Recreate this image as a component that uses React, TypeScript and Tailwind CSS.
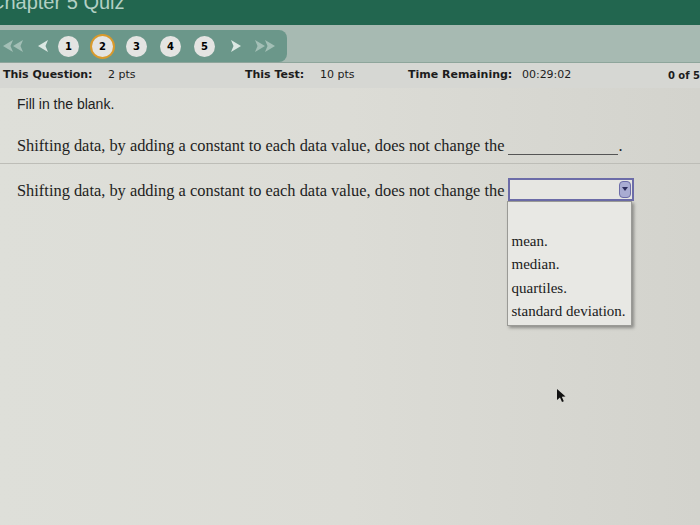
import React from 'react';

const sans = { fontFamily: '"DejaVu Sans", Verdana, sans-serif' };
const serif = { fontFamily: '"Liberation Serif", "Times New Roman", serif' };

const NavCircle = ({ n, active }: { n: number; active?: boolean }) => (
  <div
    className={`w-[21px] h-[21px] rounded-full bg-[#e4e4e2] flex items-center justify-center text-[10px] font-bold text-black ${
      active ? 'ring-2 ring-[#d99a2c]' : ''
    }`}
    style={sans}
  >
    {n}
  </div>
);

// chevron arrows in the nav strip
const Arrow = ({ dir, double, faded }: { dir: 'l' | 'r'; double?: boolean; faded?: boolean }) => {
  const one = dir === 'l' ? 'M11 1L1 7L11 13L8.5 7Z' : 'M1 1L11 7L1 13L3.5 7Z';
  return (
    <svg width={double ? 22 : 12} height="14" viewBox={double ? '0 0 22 14' : '0 0 12 14'} className={faded ? 'opacity-50' : ''}>
      <path d={one} fill="#dbe8e3" />
      {double && <path d={one} transform="translate(10 0)" fill="#dbe8e3" />}
    </svg>
  );
};

export default function App() {
  const options = ['mean.', 'median.', 'quartiles.', 'standard deviation.'];

  return (
    <div className="relative w-[700px] h-[525px] overflow-hidden bg-[#dcdcd6] flex flex-col">
      {/* title bar */}
      <div className="h-[25px] bg-[#22664f] overflow-hidden flex-none">
        <div className="text-[20px] leading-none text-[#b3d0c4] -mt-[8px] -ml-[10px]" style={{ fontFamily: '"Liberation Sans", Arial, sans-serif' }}>
          Chapter 5 Quiz
        </div>
      </div>

      {/* navigation strip */}
      <div className="h-[37px] bg-[#a7bab2] flex-none pt-[5px]">
        <div className="w-[287px] h-[32px] bg-[#6b978a] rounded-r-lg flex items-center pl-[2px]">
          <div className="w-[35px]"><Arrow dir="l" double faded /></div>
          <div className="w-[21px]"><Arrow dir="l" /></div>
          <div className="flex items-center gap-[13px]">
            <NavCircle n={1} />
            <NavCircle n={2} active />
            <NavCircle n={3} />
            <NavCircle n={4} />
            <NavCircle n={5} />
          </div>
          <div className="ml-[15px] w-[24px]"><Arrow dir="r" /></div>
          <Arrow dir="r" double faded />
        </div>
      </div>

      {/* info bar */}
      <div className="h-[26px] bg-[#d6d7d3] flex-none flex items-center text-[11px] text-[#1c1c1c] border-t border-[#8ea59b]" style={sans}>
        <span className="font-bold ml-[3px] w-[105px]">This Question:</span>
        <span className="w-[137px]">2 pts</span>
        <span className="font-bold w-[75px]">This Test:</span>
        <span className="w-[88px]">10 pts</span>
        <span className="font-bold w-[114px]">Time Remaining:</span>
        <span className="w-[146px]">00:29:02</span>
        <span className="font-bold text-[10px]">0 of 5</span>
      </div>

      {/* content */}
      <div className="flex-1 bg-gradient-to-r from-[#dedfd9] via-[#dcdcd6] to-[#d3d3cd]">
        <div className="pl-[17px] pt-[6px] text-[14px] text-[#222]" style={{ fontFamily: '"Liberation Sans", Arial, sans-serif' }}>
          Fill in the blank.
        </div>

        <div className="pl-[17px] pt-[19px] pb-[4px] text-[16.4px] text-[#1e1e1e] flex items-end border-b border-[#bdbdb7]" style={serif}>
          <span>Shifting data, by adding a constant to each data value, does not change the</span>
          <span className="w-[110px] ml-[4px] mb-[4px] border-b border-[#555]" />
          <span>.</span>
        </div>

        <div className="pl-[17px] pt-[14px] flex items-start text-[16.4px] text-[#1e1e1e]" style={serif}>
          <span className="pt-[1px]">Shifting data, by adding a constant to each data value, does not change the</span>
          <div className="ml-[4px] flex flex-col">
            <div className="w-[126px] h-[23px] border-2 border-[#6c6ca8] bg-[#e6e6e2] flex justify-end items-center pr-[1px]">
              <div className="w-[12px] h-[17px] bg-[#a9acd2] border border-[#6c6ca8] rounded-sm flex items-center justify-center">
                <svg width="6" height="4" viewBox="0 0 6 4"><path d="M0 0h6L3 4z" fill="#2d2d5c" /></svg>
              </div>
            </div>
            <div className="w-[125px] -ml-[1px] bg-[#e8e8e4] border border-[#9a9a96] shadow-[2px_2px_3px_rgba(0,0,0,0.35)] pt-[28px] pb-[1px]">
              {options.map((o) => (
                <div key={o} className="px-[3px] h-[23.5px] leading-[23.5px] text-[15px] text-[#1a1a1a] whitespace-nowrap">
                  {o}
                </div>
              ))}
            </div>
          </div>
        </div>
      </div>

      {/* mouse pointer */}
      <svg className="absolute left-[557px] top-[389px]" width="10" height="14" viewBox="0 0 10 14">
        <path d="M0 0L0 11L3 8.5L5 13L6.8 12.2L4.8 7.8L8.5 7.5Z" fill="#111" />
      </svg>
    </div>
  );
}
